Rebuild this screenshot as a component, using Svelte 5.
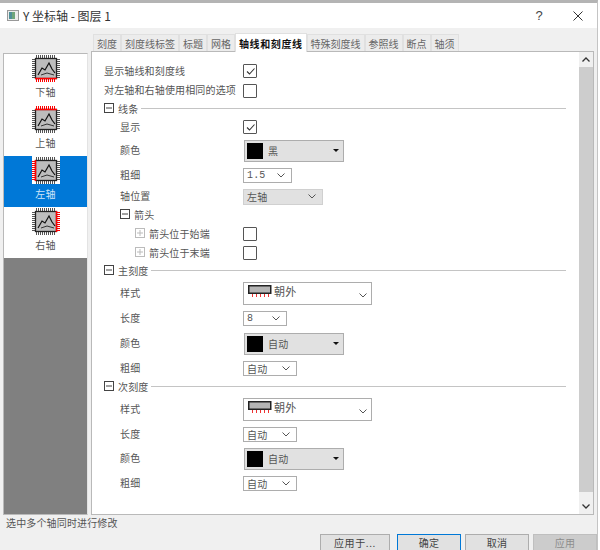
<script>
  // axis list on the left, the red edge shows which side of the plot it is
  const axes = [
    { name: '下轴', side: 'bottom' },
    { name: '上轴', side: 'top' },
    { name: '左轴', side: 'left', active: true },
    { name: '右轴', side: 'right' }
  ];
  const tabs = ['刻度', '刻度线标签', '标题', '网格', '轴线和刻度线', '特殊刻度线', '参照线', '断点', '轴须'];
  const ticks = [4.5, 6.5, 8.5, 10.5, 12.5, 14.5, 16.5, 18.5, 20.5, 22.5];
</script>

{#snippet treeBox(minor)}
  <svg class="tree" class:minor width="10" height="10" viewBox="0 0 10 10">
    <rect x=".5" y=".5" width="9" height="9" fill="none" stroke="currentColor" />
    <path d="M2 5h6" stroke="currentColor" />
    {#if minor}<path d="M5 2v6" stroke="currentColor" />{/if}
  </svg>
{/snippet}

{#snippet chevron()}
  <svg class="chev" width="8" height="5" viewBox="0 0 8 5">
    <path d="M.5 .5 4 4 7.5 .5" fill="none" stroke="#555" />
  </svg>
{/snippet}

{#snippet section(title, h)}
  <div class="row head" style:height="{h}px">
    {@render treeBox(false)}
    <span class="title">{title}</span>
    <span class="rule"></span>
  </div>
{/snippet}

{#snippet check(label, h, checked, cls = '')}
  <div class="row {cls}" style:height="{h}px">
    {#if cls === 'leaf'}{@render treeBox(true)}{/if}
    <span class="label">{label}</span>
    <span class="box">
      {#if checked}
        <svg width="11" height="11" viewBox="0 0 11 11"><path d="M2 5.5 4.5 8 9.5 2.5" fill="none" stroke="#333" stroke-width="1.1" /></svg>
      {/if}
    </span>
  </div>
{/snippet}

{#snippet color(label, h, value)}
  <div class="row sub" style:height="{h}px">
    <span class="label">{label}</span>
    <span class="color">
      <span class="swatch"></span>
      <span class="value">{value}</span>
      <span class="caret"></span>
    </span>
  </div>
{/snippet}

{#snippet select(label, h, value, width, grey = false)}
  <div class="row sub" style:height="{h}px">
    <span class="label">{label}</span>
    <span class="select" class:grey style:width="{width}px">
      <span class:num={/\d/.test(value)}>{value}</span>
      {@render chevron()}
    </span>
  </div>
{/snippet}

{#snippet tickStyle(label, h)}
  <div class="row sub" style:height="{h}px">
    <span class="label">{label}</span>
    <span class="style">
      <svg width="24" height="13" viewBox="0 0 24 13">
        <rect x=".75" y=".75" width="22" height="7.5" fill="#b5b5b5" stroke="#222" stroke-width="1.5" />
        <path d="M4.5 9v3M8.5 9v3M12.5 9v3M16.5 9v3M20.5 9v3" stroke="#e33" />
      </svg>
      <span class="style-text">朝外</span>
      {@render chevron()}
    </span>
  </div>
{/snippet}

<div class="window">
  <header>
    <svg width="12" height="11" viewBox="0 0 12 11">
      <rect x=".5" y=".5" width="11" height="10" fill="#ececec" stroke="#999" />
      <rect x="2" y="2" width="3" height="7" fill="#4f8f98" />
      <rect x="5" y="2" width="3" height="7" fill="#6fa57a" />
    </svg>
    <span class="caption">Y 坐标轴 - 图层 1</span>
    <span class="help">?</span>
    <svg class="close" width="10" height="10" viewBox="0 0 10 10">
      <path d="M.5 .5l9 9M9.5 .5l-9 9" stroke="#333" />
    </svg>
  </header>

  <div class="tabs">
    {#each tabs as tab, i}
      <span class="tab" class:on={i === 4}>{tab}</span>
    {/each}
  </div>

  <div class="body">
    <aside>
      {#each axes as axis}
        <div class="axis" class:active={axis.active}>
          <span class="thumb">
            <svg width="28" height="27" viewBox="0 0 28 27">
              {#each ticks as t}
                <path d="M{t} 0v4" stroke={axis.side === 'top' ? '#f00' : '#555'} />
                <path d="M{t} 23v4" stroke={axis.side === 'bottom' ? '#f00' : '#555'} />
                <path d="M0 {t}h4" stroke={axis.side === 'left' ? '#f00' : '#555'} />
                <path d="M24 {t}h4" stroke={axis.side === 'right' ? '#f00' : '#555'} />
              {/each}
              <rect x="3.5" y="3.5" width="21" height="20" fill="#bdbdbd" stroke="#222" stroke-width="1.3" />
              {#if axis.side === 'bottom'}<path d="M3 23.5h22" stroke="#f00" stroke-width="1.5" />{/if}
              {#if axis.side === 'top'}<path d="M3 3.5h22" stroke="#f00" stroke-width="1.5" />{/if}
              {#if axis.side === 'left'}<path d="M3.5 3v21" stroke="#f00" stroke-width="1.5" />{/if}
              {#if axis.side === 'right'}<path d="M24.5 3v21" stroke="#f00" stroke-width="1.5" />{/if}
              <path d="M6 20 10 13 13 15 17 8 20 14 23 18" fill="none" stroke="#111" stroke-width="1.2" />
              <path d="M9 20 15 18 22 20" fill="none" stroke="#333" />
            </svg>
          </span>
          <span class="name">{axis.name}</span>
        </div>
      {/each}
      <div class="filler"></div>
    </aside>

    <main>
      <div class="form">
        {@render check('显示轴线和刻度线', 20, true)}
        {@render check('对左轴和右轴使用相同的选项', 19, false)}
        {@render section('线条', 18)}
        {@render check('显示', 18, true, 'sub')}
        {@render color('颜色', 28, '黑')}
        {@render select('粗细', 22, '1.5', 49)}
        {@render select('轴位置', 20, '左轴', 80, true)}
        <div class="row arrow-head">
          {@render treeBox(false)}
          <span class="title">箭头</span>
        </div>
        {@render check('箭头位于始端', 20, false, 'leaf')}
        {@render check('箭头位于末端', 18, false, 'leaf')}
        {@render section('主刻度', 18)}
        {@render tickStyle('样式', 26)}
        {@render select('长度', 24, '8', 44)}
        {@render color('颜色', 26, '自动')}
        {@render select('粗细', 24, '自动', 54)}
        {@render section('次刻度', 14)}
        {@render tickStyle('样式', 30)}
        {@render select('长度', 20, '自动', 54)}
        {@render color('颜色', 28, '自动')}
        {@render select('粗细', 22, '自动', 54)}
      </div>
      <div class="scroll">
        <svg width="8" height="5" viewBox="0 0 8 5"><path d="M.5 4.5 4 1 7.5 4.5" fill="none" stroke="#333" stroke-width="1.3" /></svg>
        <span class="bar"></span>
        <svg width="8" height="5" viewBox="0 0 8 5"><path d="M.5 .5 4 4 7.5 .5" fill="none" stroke="#333" stroke-width="1.3" /></svg>
      </div>
    </main>
  </div>

  <div class="status">选中多个轴同时进行修改</div>

  <footer>
    <button class="apply-to">应用于...</button>
    <button class="ok">确定</button>
    <button>取消</button>
    <button class="off">应用</button>
  </footer>
</div>

<style>
  :global(body) {
    background: #fff;
    overflow: hidden;
  }
  .window {
    width: 598px;
    height: 550px;
    box-sizing: border-box;
    border-top: 3px solid #b4b4b4;
    border-right: 1px solid #c4c4c4;
    background: #f0f0f0;
    overflow: hidden;
    display: flex;
    flex-direction: column;
    font-family: "Noto Sans CJK SC", "Liberation Sans", sans-serif;
    font-size: 10px;
    letter-spacing: .15px;
    color: #555;
  }
  header {
    height: 25px;
    background: #fff;
    display: flex;
    align-items: center;
    padding: 0 0 0 7px;
    flex: none;
  }
  .caption {
    margin-left: 4px;
    font-size: 12px;
    letter-spacing: 0;
    color: #333;
    flex: 1;
  }
  .help {
    font-size: 13px;
    color: #444;
    margin-right: 30px;
    font-family: "Liberation Sans", sans-serif;
  }
  .close {
    margin-right: 14px;
  }
  .tabs {
    height: 19px;
    margin-top: 4px;
    padding-left: 93px;
    display: flex;
    align-items: flex-end;
    flex: none;
    position: relative;
    z-index: 1;
    letter-spacing: 0;
  }
  .tab {
    height: 17px;
    line-height: 17px;
    padding: 0 3px;
    background: #ececec;
    border: 1px solid #e0e0e0;
    border-bottom: none;
    box-sizing: border-box;
    white-space: nowrap;
    color: #666;
  }
  .tab.on {
    height: 19px;
    line-height: 19px;
    background: #fff;
    color: #111;
    font-weight: 700;
    padding: 0 3px;
    letter-spacing: .6px;
    margin-bottom: -1px;
  }
  .body {
    height: 464px;
    flex: none;
    display: flex;
    padding-left: 3px;
    gap: 3px;
  }
  aside {
    width: 85px;
    box-sizing: border-box;
    margin-top: 2px;
    border: 1px solid #b9b9b9;
    border-right-color: #e3e3e3;
    display: flex;
    flex-direction: column;
    background: #fff;
  }
  .axis {
    height: 51px;
    display: flex;
    flex-direction: column;
    align-items: center;
    flex: none;
  }
  .axis.active {
    background: #0078d7;
    color: #cfe4f7;
  }
  .thumb {
    width: 28px;
    height: 28px;
    background: #fff;
    display: flex;
    align-items: center;
    justify-content: center;
  }
  .name {
    margin-top: 3px;
    line-height: 14px;
    font-size: 10px;
  }
  .filler {
    flex: 1;
    background: #808080;
  }
  main {
    flex: 1;
    margin-right: 3px;
    border: 1px solid #b9b9b9;
    background: #fff;
    display: flex;
  }
  .form {
    flex: 1;
    padding: 8px 0 0 12px;
    min-width: 0;
  }
  .row {
    display: flex;
    align-items: center;
    white-space: nowrap;
  }
  .label {
    width: 139px;
    box-sizing: border-box;
    flex: none;
  }
  .sub .label {
    padding-left: 16px;
  }
  .leaf .tree {
    margin-left: 31px;
  }
  .leaf .label {
    width: 98px;
    padding-left: 4px;
  }
  .head {
    padding-right: 13px;
  }
  .arrow-head {
    height: 18px;
    padding-left: 16px;
  }
  .tree {
    flex: none;
    color: #444;
  }
  .tree.minor {
    color: #bbb;
  }
  .title {
    margin-left: 4px;
  }
  .rule {
    flex: 1;
    height: 1px;
    background: #c4c4c4;
    margin-left: 3px;
  }
  .box {
    width: 12px;
    height: 12px;
    border: 1px solid #555;
    border-radius: 1px;
    display: flex;
    align-items: center;
    justify-content: center;
    box-sizing: content-box;
    margin-top: 2px;
  }
  .color {
    margin: 3px 0 0 1px;
    width: 100px;
    height: 22px;
    box-sizing: border-box;
    background: #e1e1e1;
    border: 1px solid #adadad;
    display: flex;
    align-items: center;
    padding: 0 4px 0 2px;
  }
  .swatch {
    width: 16px;
    height: 16px;
    background: #000;
  }
  .value {
    margin-left: 5px;
    flex: 1;
  }
  .caret {
    border: 3px solid transparent;
    border-top: 3px solid #111;
    border-bottom: none;
    width: 0;
    height: 0;
  }
  .select {
    height: 15px;
    margin-top: 3px;
    box-sizing: border-box;
    border: 1px solid #adadad;
    background: #fff;
    display: flex;
    align-items: center;
    justify-content: space-between;
    padding: 0 6px 0 3px;
    font-size: 10px;
  }
  .select.grey {
    height: 16px;
    background: #e1e1e1;
    border-color: #d0d0d0;
  }
  .num {
    font-family: "Liberation Mono", monospace;
    font-size: 10px;
  }
  .style {
    width: 129px;
    height: 23px;
    margin-top: 2px;
    box-sizing: border-box;
    border: 1px solid #adadad;
    background: #fff;
    display: flex;
    padding: 2px 4px 0 4px;
  }
  .style-text {
    font-size: 11px;
    line-height: 13px;
    margin-left: 2px;
    flex: 1;
  }
  .style .chev {
    margin-top: 8px;
  }
  .scroll {
    width: 14px;
    flex: none;
    background: #f0f0f0;
    display: flex;
    flex-direction: column;
    align-items: center;
    padding: 5px 0;
    box-sizing: border-box;
  }
  .bar {
    width: 14px;
    flex: 1;
    background: #cdcdcd;
    margin: 5px 0 12px;
  }
  .status {
    height: 15px;
    line-height: 15px;
    padding-left: 6px;
    flex: none;
    color: #555;
  }
  footer {
    display: flex;
    padding-left: 320px;
    margin-top: 4px;
    gap: 4px;
    flex: none;
  }
  button {
    width: 64px;
    height: 16px;
    margin: 0;
    padding: 0;
    font: inherit;
    line-height: 14px;
    letter-spacing: inherit;
    color: #444;
    background: #e1e1e1;
    border: 1px solid #adadad;
    border-bottom: none;
  }
  .apply-to {
    width: 70px;
    margin-right: 3px;
    letter-spacing: .6px;
  }
  .ok {
    border-color: #0078d7;
  }
  .off {
    background: #ccc;
    border-color: #bfbfbf;
    color: #8c8c8c;
  }
</style>
